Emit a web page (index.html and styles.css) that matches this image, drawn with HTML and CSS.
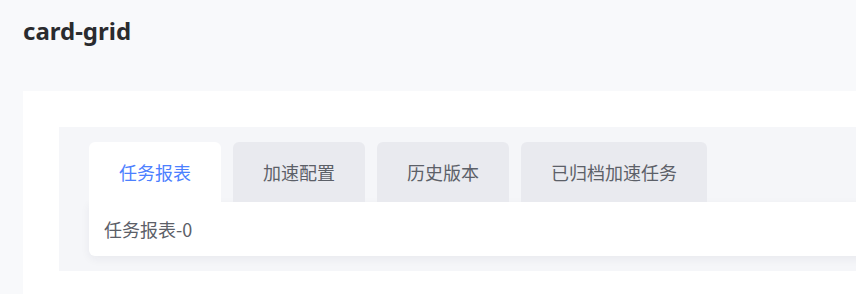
FILE: index.html
```html
<!DOCTYPE html>
<html lang="zh">
<head>
<meta charset="utf-8">
<link rel="stylesheet" href="styles.css">
</head>
<body>
<div class="page">
  <h1 class="title">card-grid</h1>
  <div class="card">
    <div class="tabs-area">
      <div class="tab-bar">
        <div class="tab active">任务报表</div>
        <div class="tab">加速配置</div>
        <div class="tab">历史版本</div>
        <div class="tab wide">已归档加速任务</div>
      </div>
      <div class="panel">任务报表-0</div>
    </div>
  </div>
</div>
</body>
</html>
```
FILE: styles.css
```css
html, body {
  margin: 0;
  padding: 0;
  background: #f8f9fb;
  overflow: hidden;
}
.page {
  width: 1300px;
  padding: 0 0 0 23px;
  font-family: "Noto Sans", "Noto Sans CJK SC", sans-serif;
}
.title {
  margin: 0;
  height: 91px;
  box-sizing: border-box;
  padding-top: 15px;
  font-size: 24px;
  line-height: 32px;
  font-weight: 700;
  color: #2a2b2e;
}
.card {
  background: #ffffff;
  padding: 36px 0 40px 36px;
}
.tabs-area {
  background: #f5f6f9;
  padding: 15px 0 15px 30px;
}
.tab-bar {
  display: flex;
  gap: 12px;
}
.tab {
  width: 132px;
  height: 60px;
  display: flex;
  align-items: center;
  justify-content: center;
  background: #e9eaef;
  border-radius: 6px 6px 0 0;
  font-family: "Noto Sans CJK SC", sans-serif;
  font-size: 18px;
  color: #5c6068;
}
.tab.wide {
  width: 186px;
}
.tab.active {
  background: #ffffff;
  color: #4c80ff;
}
.panel {
  background: #ffffff;
  height: 54px;
  box-sizing: border-box;
  padding-left: 15px;
  display: flex;
  align-items: center;
  border-radius: 0 6px 6px 6px;
  box-shadow: 0 3px 10px rgba(30, 40, 70, 0.06);
  font-family: "Noto Sans CJK SC", sans-serif;
  font-size: 18px;
  color: #5c6068;
}
```
